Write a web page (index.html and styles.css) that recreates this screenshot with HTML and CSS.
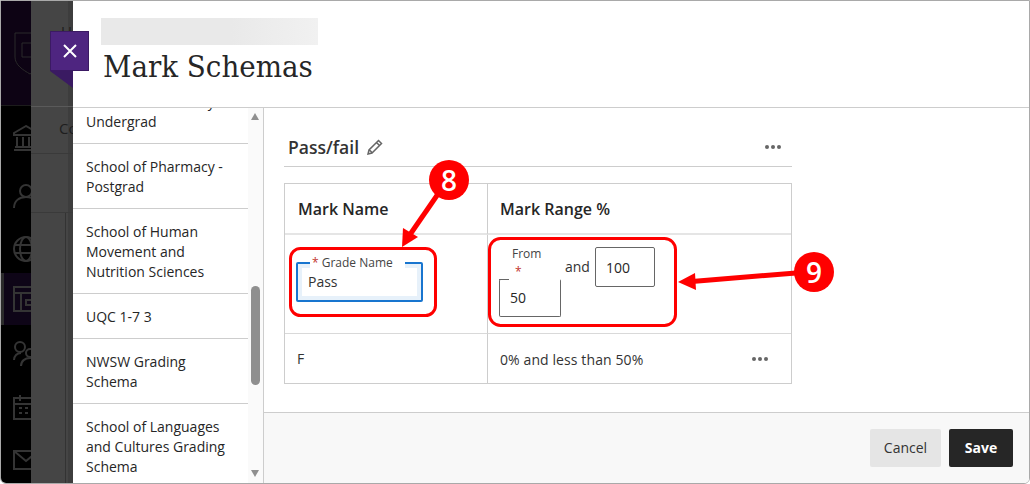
FILE: index.html
```html
<!DOCTYPE html>
<html lang="en">
<head>
<meta charset="utf-8">
<title>Mark Schemas</title>
<link rel="stylesheet" href="styles.css">
</head>
<body>
<div class="window">
  <aside class="rail">
    <div class="rail-top">
      <svg class="icon shield" viewBox="0 0 24 44"><path d="M1 2h30v24c0 8-8 13-15 17C9 39 1 34 1 26z"/><path d="M8 12h16v14H8z"/></svg>
    </div>
    <div class="rail-item"><svg class="icon" viewBox="0 0 26 26"><path d="M13 1 1 8v2h24V8zM4 12v9M10 12v9M16 12v9M22 12v9M2 22h22M1 25h24"/></svg></div>
    <div class="rail-item"><svg class="icon" viewBox="0 0 26 26"><circle cx="13" cy="8" r="6"/><path d="M1 25c0-7 5-11 12-11s12 4 12 11"/></svg></div>
    <div class="rail-item"><svg class="icon" viewBox="0 0 26 26"><circle cx="13" cy="13" r="12"/><ellipse cx="13" cy="13" rx="6" ry="12"/><path d="M1 9h24M1 17h24"/></svg></div>
    <div class="rail-item active"><svg class="icon" viewBox="0 0 26 26"><path d="M1 1h24v24H1zM1 7h24M8 7v18M13 14h8v5h-8z"/></svg></div>
    <div class="rail-item"><svg class="icon" viewBox="0 0 26 26"><circle cx="7" cy="6" r="5"/><circle cx="17" cy="12" r="4"/><path d="M1 19c0-4 3-7 7-7M8 25c0-5 4-8 9-8s8 3 8 8"/></svg></div>
    <div class="rail-item"><svg class="icon" viewBox="0 0 26 26"><path d="M1 4h24v21H1zM1 10h24M7 1v6M19 1v6M6 14h3M12 14h3M18 14h3M6 19h3M12 19h3M18 19h3"/></svg></div>
    <div class="rail-item"><svg class="icon" viewBox="0 0 26 26"><path d="M1 5h24v18H1zM1 5l12 10L25 5"/></svg></div>
  </aside>

  <div class="shade">
    <div class="shade-top"><span class="shade-text">U</span></div>
    <div class="shade-course"><span class="shade-text">Co</span></div>
    <div class="shade-strip"></div>
    <div class="shade-rest"></div>
  </div>

  <section class="modal">
    <header class="modal-head">
      <div class="crumb"></div>
      <h1 class="title">Mark Schemas</h1>
    </header>
    <div class="modal-body">
      <nav class="schemas">
        <ul class="schema-list">
          <li>School of Pharmacy<br>Undergrad</li>
          <li>School of Pharmacy - Postgrad</li>
          <li>School of Human Movement and Nutrition Sciences</li>
          <li>UQC 1-7 3</li>
          <li>NWSW Grading Schema</li>
          <li>School of Languages and Cultures Grading Schema</li>
        </ul>
        <div class="scrollbar">
          <span class="arrow-up"></span>
          <span class="thumb"></span>
          <span class="arrow-down"></span>
        </div>
      </nav>
      <div class="detail">
        <main class="detail-main">
          <div class="schema-head">
            <h2 class="schema-name">Pass/fail</h2>
            <svg class="pencil" viewBox="0 0 16 16"><path d="M11.5 1.5l3 3L5 14l-4 1 1-4zM9.500 3.500l3 3M2.500 11l2.500 2.500"/></svg>
            <span class="dots head-dots"><i></i><i></i><i></i></span>
          </div>
          <div class="marks">
            <div class="cell th">Mark Name</div>
            <div class="cell th">Mark Range %</div>
            <div class="cell name-cell">
              <div class="grade-field">
                <span class="grade-label"><b>*</b> Grade Name</span>
                <span class="grade-value">Pass</span>
              </div>
            </div>
            <div class="cell range-cell">
              <div class="from-field">
                <span class="from-label">From</span>
                <span class="from-star">*</span>
                <div class="num from-num">50</div>
              </div>
              <span class="and">and</span>
              <div class="num to-num">100</div>
            </div>
            <div class="cell last">F</div>
            <div class="cell last range-text">
              <span>0% and less than 50%</span>
              <span class="dots"><i></i><i></i><i></i></span>
            </div>
          </div>
        </main>
        <footer class="modal-foot">
          <button class="btn cancel" type="button">Cancel</button>
          <button class="btn save" type="button">Save</button>
        </footer>
      </div>
    </div>
  </section>

  <button class="close" type="button" aria-label="Close">
    <svg viewBox="0 0 16 16"><path d="M2 2l12 12M14 2 2 14"/></svg>
  </button>
  <span class="fold"></span>

  <svg class="marks-overlay" viewBox="0 0 1030 484">
    <rect x="290.500" y="248.500" width="145" height="67" rx="10"/>
    <rect x="489.500" y="238.500" width="186" height="87" rx="11"/>
    <path class="shaft" d="M438 194 409 236"/>
    <path class="head" d="M402 247 403 228 418 237z"/>
    <path class="shaft" d="M796 273 692 281.500"/>
    <path class="head" d="M678 282 695 273 696 290z"/>
  </svg>
  <span class="badge badge-8">8</span>
  <span class="badge badge-9">9</span>
</div>
</body>
</html>
```
FILE: styles.css
```css
* { box-sizing: border-box; }
html, body { margin: 0; height: 100%; overflow: hidden; background: #fff; }
body { font-family: "Open Sans", "Noto Sans", sans-serif; color: #262626; }

.window {
  position: relative;
  display: flex;
  width: 1030px;
  height: 484px;
  overflow: hidden;
  border: 1px solid #a9a9a9;
  border-radius: 0 0 6px 6px;
}

/* dimmed page behind the panel */
.rail { flex: 0 0 30px; background: #000; overflow: hidden; display: flex; flex-direction: column; }
.rail-top { height: 106px; background: #0d0314; padding: 30px 0 0 10px; border-bottom: 1px solid #1c1c1c; }
.rail-item { height: 55px; padding: 16px 0 0 12px; margin-bottom: -2px; }
.rail-item:nth-child(2) { height: 60px; margin-top: 5px; padding-top: 14px; margin-bottom: -4px; }
.rail-item.active { background: #0e0517; border-left: 3px solid #2b2b2b; padding-left: 9px; padding-top: 13px; height: 52px; margin-top: 1px; margin-bottom: 0; }
.icon { width: 26px; height: 26px; fill: none; stroke: #343434; stroke-width: 2; display: block; }
.shield { width: 30px; height: 44px; stroke-width: 1; stroke: #2a2a2a; }

.shade { flex: 0 0 42px; background: #454545; display: flex; flex-direction: column; position: relative; box-shadow: inset -5px 0 0 #3d3d3d; overflow: hidden; }
.shade-top { height: 106px; border-bottom: 1px solid #5a5a5a; padding: 19px 0 0 30px; }
.shade-course { height: 47px; border-bottom: 1px solid #3a3a3a; padding: 10px 0 0 28px; }
.shade-strip { height: 59px; border-bottom: 1px solid #3a3a3a; }
.shade-rest { flex: 1; margin-left: 34px; border-left: 1px solid #333; }
.shade-text { font-size: 15px; color: #1e1e1e; white-space: nowrap; }

/* panel */
.modal { flex: 1; display: flex; flex-direction: column; background: #fff; min-width: 0; }
.modal-head { height: 107px; flex: none; border-bottom: 1px solid #cdcdcd; padding: 17px 0 0 28px; }
.crumb { width: 217px; height: 27px; background: linear-gradient(90deg, #e9e9e9 60%, #f1f1f1); }
.title {
  margin: 0 0 0 2px;
  font-family: "DejaVu Serif", "Liberation Serif", serif;
  font-weight: 400;
  font-size: 30px;
  line-height: 43px;
  color: #262626;
  white-space: nowrap;
  transform: scaleX(0.925);
  transform-origin: left center;
}
.modal-body { flex: 1; display: flex; min-height: 0; }

.schemas { flex: 0 0 191px; position: relative; overflow: hidden; border-right: 1px solid #cdcdcd; }
.schema-list {
  list-style: none;
  margin: -29px 15px 0 0;
  padding: 0;
  font-size: 14px;
  line-height: 20px;
  color: #262626;
}
.schema-list li { padding: 12.500px 13px 11.500px; border-bottom: 1px solid #cdcdcd; }
.schema-list li:nth-child(6) { border-bottom: 0; }

.scrollbar { position: absolute; top: 0; right: 0; bottom: 0; width: 15px; background: #fafafa; }
.thumb { position: absolute; top: 178px; left: 3px; width: 9px; height: 99px; background: #8f8f8f; border-radius: 5px; }
.arrow-up, .arrow-down { position: absolute; left: 3px; width: 0; height: 0; border-left: 4.5px solid transparent; border-right: 4.5px solid transparent; }
.arrow-up { top: 5px; border-bottom: 7px solid #8f8f8f; }
.arrow-down { bottom: 6px; border-top: 7px solid #8f8f8f; }

.detail { flex: 1; display: flex; flex-direction: column; min-width: 0; }
.detail-main { flex: 1; padding: 0 0 0 20px; }
.schema-head {
  width: 508px;
  height: 59px;
  margin: 0 0 16px;
  padding: 19px 11px 0 4px;
  display: flex;
  align-items: center;
  border-bottom: 1px solid #cdcdcd;
}
.schema-name { margin: 0; font-size: 17.500px; line-height: 40px; font-weight: 600; color: #333; }
.pencil { width: 16px; height: 16px; margin-left: 8px; fill: none; stroke: #666; stroke-width: 1.5; }
.dots { display: inline-flex; gap: 2px; }
.dots i { width: 4px; height: 4px; border-radius: 50%; background: #666; }
.head-dots { margin-left: auto; }

.marks {
  width: 508px;
  display: grid;
  grid-template-columns: 203px 1fr;
  grid-template-rows: 51px 99px 49px;
  border: 1px solid #cdcdcd;
}
.cell { padding: 0 12px; display: flex; align-items: center; font-size: 14px; color: #333; border-bottom: 1px solid #d9d9d9; }
.cell:nth-child(odd) { border-right: 1px solid #cdcdcd; }
.th { font-weight: 600; font-size: 16px; color: #262626; border-bottom: 2px solid #e5e5e5; }
.th:nth-child(1) { padding-left: 13px; }
.last { border-bottom: 0; }

.name-cell { align-items: flex-start; padding-top: 27px; }
.grade-field {
  position: relative;
  width: 127px;
  height: 40px;
  margin-left: -1px;
  border: 2px solid #1875cf;
  border-radius: 2px;
  box-shadow: inset 0 0 0 4px #e7f1fa;
  padding: 8px 10px 0;
  font-size: 14px;
  line-height: 20px;
}
.grade-label {
  position: absolute;
  top: -8px;
  left: 12px;
  padding: 0 12px 0 2px;
  background: #fff;
  font-size: 12px;
  line-height: 14px;
  color: #444;
  white-space: nowrap;
}
.grade-label b, .from-star { color: #c2342c; font-weight: 400; }
.grade-value { color: #333; }

.range-cell { align-items: flex-start; padding-top: 12px; gap: 4px; }
.from-field { position: relative; width: 62px; height: 70px; flex: none; padding-top: 32px; margin-left: -1px; }
.from-label { position: absolute; top: 0; left: 13px; font-size: 12px; line-height: 14px; color: #444; }
.from-star { position: absolute; top: 18px; left: 13px; font-size: 12px; line-height: 14px; padding: 0 3px; }
.num {
  border: 1px solid #666;
  border-radius: 2px;
  padding-left: 10px;
  display: flex;
  align-items: center;
  font-size: 14px;
  color: #262626;
}
.from-num { position: relative; width: 62px; height: 38px; padding-bottom: 2px; border-top-color: transparent; }
.from-num::before { content: ""; position: absolute; top: -1px; left: -1px; width: 10px; height: 1px; background: #666; }
.to-num { width: 60px; height: 40px; margin-left: 1px; }
.and { margin-top: 10px; font-size: 14px; line-height: 20px; color: #333; }

.range-text { justify-content: space-between; font-size: 14px; letter-spacing: 0.1px; padding-top: 1px; padding-right: 23px; }

.modal-foot {
  flex: 0 0 71px;
  background: #f8f8f8;
  border-top: 1px solid #cdcdcd;
  padding: 16px 16px 0 0;
  display: flex;
  justify-content: flex-end;
  align-items: flex-start;
  gap: 8px;
}
.btn { height: 38px; border: 0; border-radius: 2px; font-family: inherit; font-size: 14px; padding: 0 0 2px; }
.cancel { width: 71px; background: #e5e5e5; color: #333; }
.save { width: 64px; background: #262626; color: #fff; font-weight: 700; }

/* close tab, hangs over the panel edge */
.close {
  position: absolute;
  top: 30px;
  left: 49px;
  width: 39px;
  height: 40px;
  padding: 10px 11px;
  background: #4e2580;
  border: 1px solid #3b1a63;
  display: block;
}
.close svg { display: block; width: 16px; height: 16px; fill: none; stroke: #fff; stroke-width: 2; }
.fold {
  position: absolute;
  top: 70px;
  left: 49px;
  width: 0;
  height: 0;
  border-top: 17px solid #3a1a62;
  border-left: 23px solid transparent;
}

/* red annotations */
.marks-overlay { position: absolute; top: -1px; left: -1px; width: 1030px; height: 484px; pointer-events: none; }
.marks-overlay rect { fill: none; stroke: #f00; stroke-width: 3; }
.marks-overlay .shaft { fill: none; stroke: #f00; stroke-width: 5; }
.marks-overlay .head { fill: #f00; }
.badge {
  position: absolute;
  width: 40px;
  height: 40px;
  border-radius: 50%;
  background: #f00;
  color: #fff;
  font-size: 28px;
  font-weight: 600;
  line-height: 40px;
  text-align: center;
}
.badge-8 { top: 159px; left: 428px; }
.badge-9 { top: 251px; left: 793px; }
```
